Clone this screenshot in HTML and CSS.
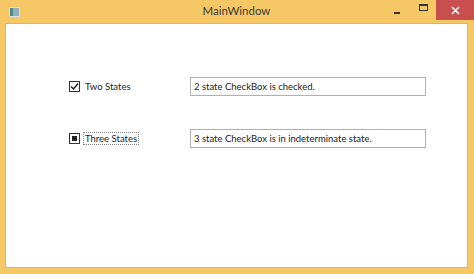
FILE: index.html
```html
<!DOCTYPE html>
<html lang="en">
<head>
  <meta charset="UTF-8" />
  <title>MainWindow</title>
  <link rel="stylesheet" href="styles.css">
</head>
<body>
  <div class="window">
    <div class="titlebar">
      <div class="app-icon"><span></span></div>
      <div class="title">MainWindow</div>
      <div class="controls">
        <div class="btn min"><span></span></div>
        <div class="btn max"><span></span></div>
        <div class="btn close">
          <svg width="9" height="9" viewBox="0 0 9 9"><path d="M1 1L8 8M8 1L1 8" stroke="#fff" stroke-width="1.6"/></svg>
        </div>
      </div>
    </div>

    <div class="client">
      <div class="row">
        <label class="check">
          <span class="box checked">
            <svg width="9" height="9" viewBox="0 0 9 9"><path d="M1 4.5L3.5 7L8 1.5" fill="none" stroke="#222" stroke-width="1.5"/></svg>
          </span>
          <span class="label">Two States</span>
        </label>
        <div class="textbox">2 state CheckBox is checked.</div>
      </div>

      <div class="row">
        <label class="check">
          <span class="box"><span class="fill"></span></span>
          <span class="label focus">Three States</span>
        </label>
        <div class="textbox">3 state CheckBox is in indeterminate state.</div>
      </div>
    </div>
  </div>
</body>
</html>
```

FILE: styles.css
```css
html, body {
  margin: 0;
  padding: 0;
}

body {
  width: 474px;
  height: 274px;
  overflow: hidden;
  font-family: Lato, 'Open Sans', sans-serif;
}

.window {
  height: 274px;
  background-color: #f6c865;
  display: flex;
  flex-direction: column;
  padding: 0 6px 6px 5px;
  box-sizing: border-box;
}

.titlebar {
  height: 23px;
  flex: none;
  display: flex;
  align-items: flex-start;
  position: relative;
}

.app-icon {
  width: 9px;
  height: 8px;
  margin: 7px 0 0 4px;
  background-color: #8fb0c4;
  border: 1px solid #d7dde0;
}

.app-icon span {
  display: block;
  width: 3px;
  height: 8px;
  background-color: #4e8a86;
}

.title {
  position: absolute;
  left: 0;
  right: 0;
  top: 4px;
  text-align: center;
  font-size: 11.5px;
  color: #3a3a3a;
}

.controls {
  margin-left: auto;
  margin-right: -6px;
  display: flex;
  align-items: flex-start;
}

.btn {
  height: 20px;
  display: flex;
  align-items: center;
  justify-content: center;
}

.min {
  width: 26px;
}

.min span {
  width: 6px;
  height: 2px;
  background-color: #333;
  margin-top: 5px;
}

.max {
  width: 26px;
  margin-top: -3px;
}

.max span {
  width: 7px;
  height: 4px;
  border: 1px solid #333;
  border-top-width: 2px;
}

.close {
  width: 38px;
  background-color: #c84f4e;
}

.client {
  flex: 1;
  background-color: #fff;
  border: 1px solid #e2b558;
  padding: 53px 0 0 63px;
  display: flex;
  flex-direction: column;
  gap: 33px;
}

.row {
  display: flex;
  align-items: center;
  height: 19px;
}

.check {
  width: 121px;
  display: flex;
  align-items: center;
  gap: 3px;
  font-size: 9.5px;
  color: #222;
}

.box {
  width: 9px;
  height: 9px;
  border: 1px solid #333;
  display: flex;
  align-items: center;
  justify-content: center;
  background-color: #fff;
}

.box .fill {
  width: 5px;
  height: 5px;
  background-color: #222;
}

.label {
  padding: 0 1px;
  border: 1px solid transparent;
}

.label.focus {
  border: 1px dotted #888;
}

.textbox {
  width: 231px;
  height: 17px;
  border: 1px solid #b0b0b0;
  font-size: 9.5px;
  color: #222;
  padding-left: 3px;
  line-height: 17px;
}
```
